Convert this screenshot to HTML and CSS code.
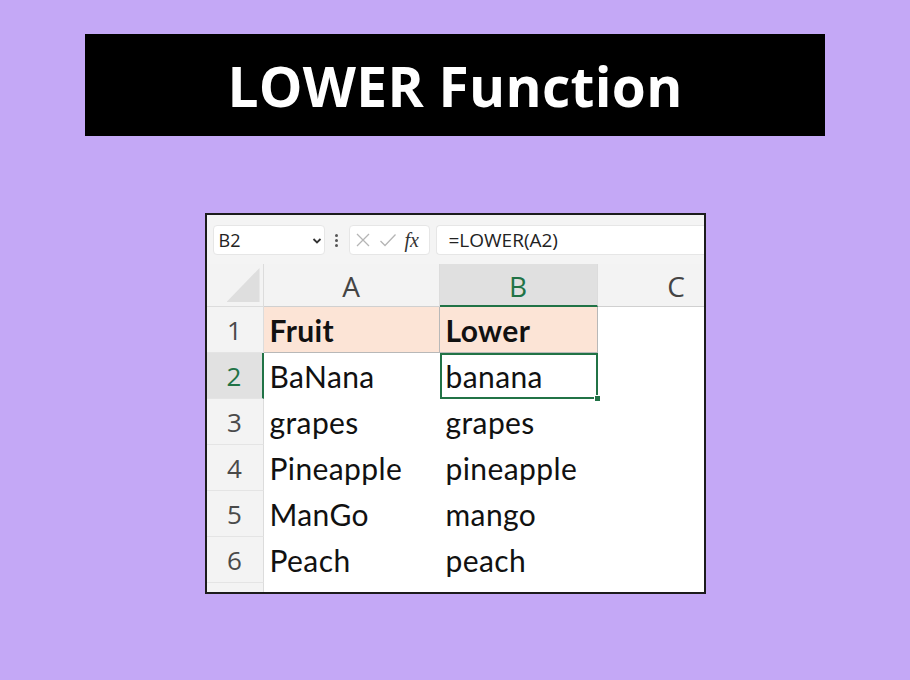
FILE: index.html
```html
<!DOCTYPE html>
<html lang="en">
<head>
<meta charset="UTF-8" />
<meta name="viewport" content="width=device-width, initial-scale=1" />
<title>LOWER Function</title>
<link rel="stylesheet" href="styles.css">
</head>
<body>

<div class="banner">
  <h1>LOWER Function</h1>
</div>

<div class="sheet">
  <div class="formula-bar">
    <div class="name-box">
      <span>B2</span>
      <svg class="chevron" width="10" height="8" viewBox="0 0 10 8"><path d="M1.5 2 L5 5.5 L8.5 2" fill="none" stroke="#333" stroke-width="1.8"/></svg>
    </div>
    <div class="dots"><i></i><i></i><i></i></div>
    <div class="fx-box">
      <svg width="16" height="16" viewBox="0 0 16 16"><path d="M2 2 L14 14 M14 2 L2 14" stroke="#b5b5b5" stroke-width="1.3"/></svg>
      <svg width="18" height="16" viewBox="0 0 18 16"><path d="M1.5 9 L6 13.5 L16.5 2.5" fill="none" stroke="#b5b5b5" stroke-width="1.3"/></svg>
      <span class="fx">fx</span>
    </div>
    <div class="formula">=LOWER(A2)</div>
  </div>

  <div class="grid">
    <div class="corner"><div class="tri"></div></div>
    <div class="col-head">A</div>
    <div class="col-head active">B</div>
    <div class="col-head">C</div>

    <div class="row-head">1</div>
    <div class="cell title">Fruit</div>
    <div class="cell title">Lower</div>
    <div class="cell"></div>

    <div class="row-head active">2</div>
    <div class="cell">BaNana</div>
    <div class="cell selected">banana<span class="handle"></span></div>
    <div class="cell"></div>

    <div class="row-head">3</div>
    <div class="cell">grapes</div>
    <div class="cell">grapes</div>
    <div class="cell"></div>

    <div class="row-head">4</div>
    <div class="cell">Pineapple</div>
    <div class="cell">pineapple</div>
    <div class="cell"></div>

    <div class="row-head">5</div>
    <div class="cell">ManGo</div>
    <div class="cell">mango</div>
    <div class="cell"></div>

    <div class="row-head">6</div>
    <div class="cell">Peach</div>
    <div class="cell">peach</div>
    <div class="cell"></div>

    <div class="row-head stub"></div>
    <div class="cell stub"></div>
    <div class="cell stub"></div>
    <div class="cell stub"></div>
  </div>
</div>

</body>
</html>
```

FILE: styles.css
```css
body {
  margin: 0;
  background: #c4a8f6;
  font-family: "Open Sans", Arial, sans-serif;
  display: flex;
  flex-direction: column;
  align-items: center;
  height: 680px;
}

/* Titulo */
.banner {
  margin-top: 34px;
  width: 740px;
  height: 102px;
  background: #000;
  display: flex;
  justify-content: center;
  align-items: center;
}
.banner h1 {
  margin: 0;
  color: #fff;
  font-size: 55px;
  font-weight: 700;
  letter-spacing: 0.3px;
}

/* Planilha (a coluna C fica cortada na borda direita) */
.sheet {
  margin-top: 77px;
  width: 497px;
  border: 2px solid #1c1c1c;
  background: #fff;
  overflow: hidden;
}

.formula-bar {
  height: 49px;
  background: #f4f4f4;
  display: flex;
  align-items: center;
  padding: 1px 0 0 6px;
  box-sizing: border-box;
}
.name-box {
  width: 112px;
  height: 30px;
  box-sizing: border-box;
  background: #fff;
  border: 1px solid #e6e6e6;
  border-radius: 4px;
  display: flex;
  align-items: center;
  justify-content: space-between;
  padding: 0 2px 0 5px;
  font-size: 18px;
  color: #222;
}
.chevron { margin-top: 1px; }
.dots {
  width: 24px;
  display: flex;
  flex-direction: column;
  align-items: center;
  gap: 2px;
}
.dots i {
  width: 3px;
  height: 3px;
  border-radius: 50%;
  background: #555;
}
.fx-box {
  width: 81px;
  height: 30px;
  box-sizing: border-box;
  background: #fff;
  border: 1px solid #e6e6e6;
  border-radius: 4px;
  display: flex;
  align-items: center;
  gap: 8px;
  padding-left: 5px;
}
.fx {
  font-family: "Liberation Serif", serif;
  font-style: italic;
  font-size: 20px;
  color: #333;
}
.formula {
  flex: 1;
  margin-left: 6px;
  height: 30px;
  box-sizing: border-box;
  background: #fff;
  border: 1px solid #e6e6e6;
  border-right: none;
  border-radius: 4px 0 0 4px;
  display: flex;
  align-items: center;
  padding-left: 12px;
  font-size: 19px;
  color: #222;
}

.grid {
  display: grid;
  width: 549px;
  grid-template-columns: 57px 176px 158px 158px;
  grid-template-rows: 43px repeat(6, 46px) 9px;
}

.corner {
  background: #f3f3f3;
  border-right: 1px solid #dcdcdc;
  border-bottom: 1px solid #dcdcdc;
  position: relative;
}
.tri {
  position: absolute;
  right: 3px;
  bottom: 4px;
  width: 33px;
  height: 34px;
  background: #dedede;
  clip-path: polygon(100% 0, 100% 100%, 0 100%);
}

.col-head {
  background: #f3f3f3;
  border-right: 1px solid #dcdcdc;
  border-bottom: 1px solid #d0d0d0;
  display: flex;
  justify-content: center;
  align-items: center;
  font-size: 28px;
  color: #444;
  padding-top: 2px;
}
.col-head.active {
  background: #e0e0e0;
  color: #217346;
  border-bottom: 2px solid #217346;
}

.row-head {
  background: #f3f3f3;
  border-right: 1px solid #dcdcdc;
  border-bottom: 1px solid #e4e4e4;
  display: flex;
  justify-content: center;
  align-items: center;
  font-size: 26px;
  color: #4a4a4a;
}
.row-head.active {
  background: #e1e1e1;
  color: #217346;
  border-right: 2px solid #217346;
}
.row-head.stub { border-bottom: none; }

.cell {
  font-family: Lato, "Liberation Sans", sans-serif;
  font-size: 30px;
  letter-spacing: 0.4px;
  color: #111;
  display: flex;
  align-items: center;
  padding-left: 6px;
  position: relative;
}
.cell.title {
  background: #fce4d6;
  font-weight: 700;
  border-right: 1px solid #b8b8b8;
  border-bottom: 1px solid #b8b8b8;
}
.cell.selected {
  outline: 2px solid #217346;
  outline-offset: -2px;
}
.handle {
  position: absolute;
  right: -3px;
  bottom: -3px;
  width: 5px;
  height: 5px;
  background: #217346;
  border: 1px solid #fff;
}
```
